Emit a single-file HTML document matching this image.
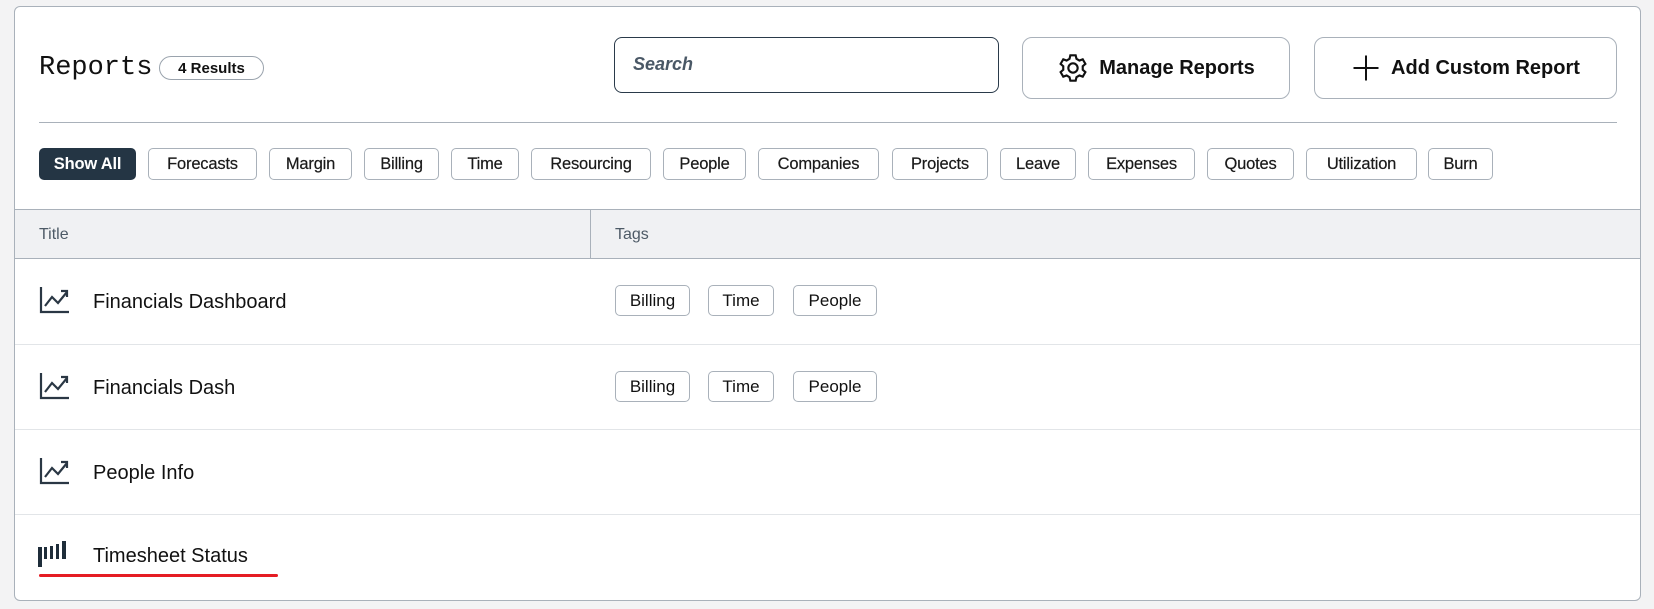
<!DOCTYPE html>
<html><head><meta charset="utf-8"><style>
*{box-sizing:border-box;margin:0;padding:0}
body{width:1654px;height:609px;background:#f3f3f4;font-family:"Liberation Sans",sans-serif;color:#111;position:relative;overflow:hidden}
.card{position:absolute;left:14px;top:6px;width:1627px;height:595px;background:#fff;border:1px solid #a9b1ba;border-radius:6px;overflow:hidden}
.abs{position:absolute}
.chip{position:absolute;top:141px;height:32px;border:1px solid #a9b1ba;border-radius:5px;font-size:16.5px;display:flex;align-items:center;justify-content:center;color:#1a1a1a;letter-spacing:-0.2px;-webkit-text-stroke:0.2px #1a1a1a}
.btn{position:absolute;top:30px;height:62px;border:1px solid #a9b1ba;border-radius:10px;display:flex;align-items:center;justify-content:center;font-size:20px;font-weight:bold;color:#111;gap:10px}
.row{position:absolute;left:0;width:1627px;border-top:1px solid #e2e5e8}
.rt{position:absolute;left:78px;font-size:20px;color:#111}
.tag{position:absolute;height:31px;border:1px solid #a9b1ba;border-radius:5px;font-size:17px;display:flex;align-items:center;justify-content:center}
</style></head><body>
<div class="card">
 <div class="abs" style="left:24px;top:46px;font-family:'Liberation Mono',monospace;font-size:27px;color:#111;font-weight:normal">Reports</div>
 <div class="abs" style="left:144px;top:49px;width:105px;height:24px;border:1px solid #9aa3ad;border-radius:12px;font-size:15px;font-weight:bold;display:flex;align-items:center;justify-content:center">4 Results</div>
 <div class="abs" style="left:599px;top:30px;width:385px;height:56px;border:1.5px solid #2a3a4a;border-radius:8px;font-size:18px;font-style:italic;font-weight:bold;color:#4a5866;padding:16px 0 0 18px">Search</div>
 <div class="btn" style="left:1007px;width:268px"><svg width="32" height="32" viewBox="0 0 24 24" fill="none" stroke="#111" stroke-width="1.6"><path d="M10 2.5h4l.6 2.6 2.2 1.3 2.5-.9 2 3.4-2 1.8v2.6l2 1.8-2 3.4-2.5-.9-2.2 1.3-.6 2.6h-4l-.6-2.6-2.2-1.3-2.5.9-2-3.4 2-1.8v-2.6l-2-1.8 2-3.4 2.5.9 2.2-1.3z"/><circle cx="12" cy="12" r="3.5"/></svg>Manage Reports</div>
 <div class="btn" style="left:1299px;width:303px"><svg width="30" height="30" viewBox="0 0 24 24" stroke="#111" stroke-width="1.6"><path d="M12 2v20M2 12h20"/></svg>Add Custom Report</div>
 <div class="abs" style="left:24px;top:115px;width:1578px;height:1px;background:#a9b1ba"></div>
 <div class="chip" style="left:24px;width:97px;background:#243544;border-color:#243544;color:#fff;font-weight:bold;-webkit-text-stroke:0">Show All</div>
 <div class="chip" style="left:133px;width:109px">Forecasts</div>
 <div class="chip" style="left:254px;width:83px">Margin</div>
 <div class="chip" style="left:349px;width:75px">Billing</div>
 <div class="chip" style="left:436px;width:68px">Time</div>
 <div class="chip" style="left:516px;width:120px">Resourcing</div>
 <div class="chip" style="left:648px;width:83px">People</div>
 <div class="chip" style="left:743px;width:121px">Companies</div>
 <div class="chip" style="left:877px;width:96px">Projects</div>
 <div class="chip" style="left:985px;width:76px">Leave</div>
 <div class="chip" style="left:1073px;width:107px">Expenses</div>
 <div class="chip" style="left:1192px;width:87px">Quotes</div>
 <div class="chip" style="left:1291px;width:111px">Utilization</div>
 <div class="chip" style="left:1413px;width:65px">Burn</div>
 <div class="abs" style="left:0;top:202px;width:1627px;height:50px;background:#f0f1f3;border-top:1px solid #a9b1ba;border-bottom:1px solid #a9b1ba"></div>
 <div class="abs" style="left:575px;top:202px;width:1px;height:50px;background:#a9b1ba"></div>
 <div class="abs" style="left:24px;top:219px;font-size:16px;color:#4d5a66">Title</div>
 <div class="abs" style="left:600px;top:219px;font-size:16px;color:#4d5a66">Tags</div>

 <div class="row" style="top:252px;border-top:none;height:85px">
  <svg class="abs" style="left:24px;top:27px" width="32" height="28" viewBox="0 0 32 28" fill="none" stroke="#2a3744" stroke-width="2.2"><path d="M2 1v25h28"/><path d="M6 20l7-9 6 6 9-11"/><path d="M22 5h6v6"/></svg>
  <div class="rt" style="top:32px">Financials Dashboard</div>
  <div class="tag" style="left:600px;top:26px;width:75px">Billing</div>
  <div class="tag" style="left:693px;top:26px;width:66px">Time</div>
  <div class="tag" style="left:778px;top:26px;width:84px">People</div>
 </div>
 <div class="row" style="top:337px;height:85px">
  <svg class="abs" style="left:24px;top:27px" width="32" height="28" viewBox="0 0 32 28" fill="none" stroke="#2a3744" stroke-width="2.2"><path d="M2 1v25h28"/><path d="M6 20l7-9 6 6 9-11"/><path d="M22 5h6v6"/></svg>
  <div class="rt" style="top:32px">Financials Dash</div>
  <div class="tag" style="left:600px;top:26px;width:75px">Billing</div>
  <div class="tag" style="left:693px;top:26px;width:66px">Time</div>
  <div class="tag" style="left:778px;top:26px;width:84px">People</div>
 </div>
 <div class="row" style="top:422px;height:85px">
  <svg class="abs" style="left:24px;top:27px" width="32" height="28" viewBox="0 0 32 28" fill="none" stroke="#2a3744" stroke-width="2.2"><path d="M2 1v25h28"/><path d="M6 20l7-9 6 6 9-11"/><path d="M22 5h6v6"/></svg>
  <div class="rt" style="top:32px">People Info</div>
 </div>
 <div class="row" style="top:507px;height:88px">
  <svg class="abs" style="left:23px;top:26px" width="36" height="28" viewBox="0 0 36 28" fill="#1f2d3a"><rect x="0" y="6" width="4" height="20"/><rect x="6" y="6" width="3" height="12"/><rect x="12" y="5" width="3" height="13"/><rect x="18" y="3" width="3" height="15"/><rect x="24" y="0" width="4" height="18"/></svg>
  <div class="rt" style="top:30px">Timesheet Status</div>
  <div class="abs" style="left:24px;top:59px;width:239px;height:3px;background:#e51c23;border-radius:2px"></div>
 </div>
</div>
</body></html>
